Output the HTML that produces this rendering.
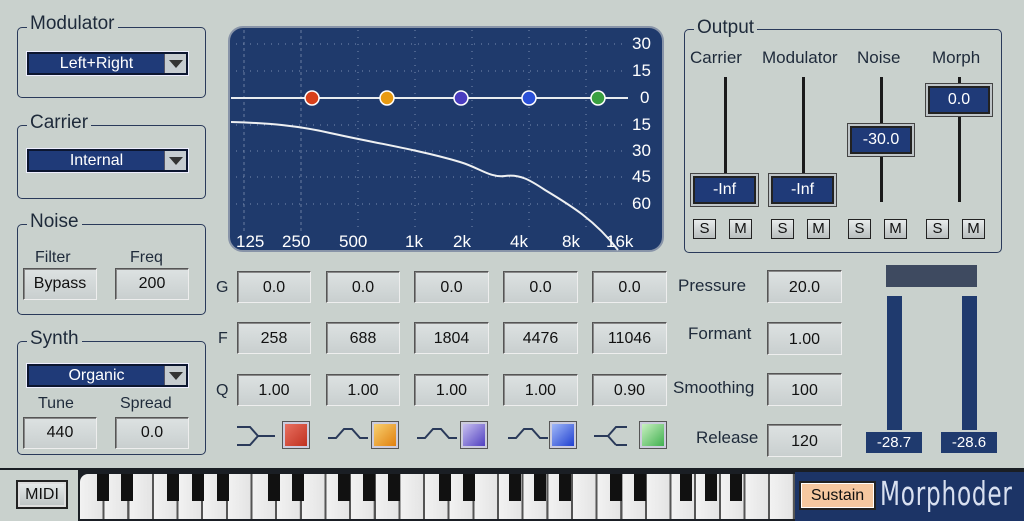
<!DOCTYPE html>
<html><head><meta charset="utf-8"><style>
*{box-sizing:border-box;margin:0;padding:0}
body{width:1024px;height:521px;overflow:hidden;background:#c9d1cd;font-family:"Liberation Sans",sans-serif;position:relative;color:#1e2a3a}
.a{position:absolute}
.box{position:absolute;border:1.5px solid #2a3a5a;border-radius:5px}
.ttl{position:absolute;background:#c9d1cd;font-size:19px;padding:0 3px;color:#1e2a3a;line-height:20px}
.dd{position:absolute;background:#1f3a78;border:2px solid #0c1630;box-shadow:0 0 0 1px #eef;color:#fff;font-size:16px;text-align:center;line-height:19px;padding-right:22px}
.dd i{position:absolute;right:0;top:0;width:22px;height:19px;background:#c6ccd0;border-left:1px solid #556}
.dd i:after{content:"";position:absolute;left:4px;top:6px;border-left:7px solid transparent;border-right:7px solid transparent;border-top:8px solid #333}
.fld{position:absolute;background:linear-gradient(#dde2e2,#c9cfcf);border:1px solid #555;border-right-color:#eee;border-bottom-color:#eee;box-shadow:inset 1px 1px 0 #888;font-size:16px;text-align:center;color:#111}
.lbl{position:absolute;font-size:16px;color:#1e2a3a}
.gl{position:absolute;color:#fff;font-size:17px}
.hd{position:absolute;background:#1f3a78;border:2px solid #222;box-shadow:0 0 0 2px #bfc5c8,0 0 0 3px #444;color:#fff;font-size:16px;text-align:center;line-height:24px}
.tr{position:absolute;width:3px;background:#1a1a1a}
.sm{position:absolute;width:23px;height:20px;background:linear-gradient(#e8ecec,#b8bebe);border:1.5px solid #222;font-size:15px;text-align:center;line-height:17px;color:#111}
.sw{position:absolute;width:28px;height:28px;border:1px solid #555;padding:2px;background:#ccd}
.sw b{display:block;width:100%;height:100%}
.mv{position:absolute;background:#1f3a6e;color:#fff;font-size:15px;text-align:center;line-height:21px}
</style></head><body>

<div class="box" style="left:17px;top:27px;width:189px;height:71px"></div>
<div class="ttl" style="left:27px;top:14px">Modulator</div>
<div class="dd" style="left:27px;top:52px;width:161px;height:23px">Left+Right<i></i></div>

<div class="box" style="left:17px;top:125px;width:189px;height:74px"></div>
<div class="ttl" style="left:27px;top:113px">Carrier</div>
<div class="dd" style="left:27px;top:149px;width:161px;height:23px">Internal<i></i></div>

<div class="box" style="left:17px;top:224px;width:189px;height:91px"></div>
<div class="ttl" style="left:27px;top:212px">Noise</div>
<div class="lbl" style="left:35px;top:249px">Filter</div>
<div class="lbl" style="left:130px;top:249px">Freq</div>
<div class="fld" style="left:23px;top:268px;width:74px;height:32px;line-height:30px">Bypass</div>
<div class="fld" style="left:115px;top:268px;width:74px;height:32px;line-height:30px">200</div>

<div class="box" style="left:17px;top:341px;width:189px;height:114px"></div>
<div class="ttl" style="left:27px;top:329px">Synth</div>
<div class="dd" style="left:27px;top:364px;width:161px;height:23px">Organic<i></i></div>
<div class="lbl" style="left:38px;top:395px">Tune</div>
<div class="lbl" style="left:120px;top:395px">Spread</div>
<div class="fld" style="left:23px;top:417px;width:74px;height:32px;line-height:30px">440</div>
<div class="fld" style="left:115px;top:417px;width:74px;height:32px;line-height:30px">0.0</div>

<svg class="a" style="left:228px;top:26px" width="436" height="226" viewBox="228 26 436 226">
<rect x="229" y="27" width="434" height="224" rx="14" fill="#1f3a6c" stroke="#8894a8" stroke-width="2"/>
<g stroke="#7a8cb0" stroke-width="1" stroke-dasharray="1 6">
<line x1="236" y1="44" x2="625" y2="44"/><line x1="236" y1="71" x2="625" y2="71"/>
<line x1="236" y1="125" x2="625" y2="125"/><line x1="236" y1="151" x2="625" y2="151"/>
<line x1="236" y1="177" x2="625" y2="177"/><line x1="236" y1="204" x2="625" y2="204"/>
<line x1="358" y1="30" x2="358" y2="232"/><line x1="415" y1="30" x2="415" y2="232"/>
<line x1="472" y1="30" x2="472" y2="232"/><line x1="529" y1="30" x2="529" y2="232"/><line x1="586" y1="30" x2="586" y2="232"/>
</g>
<line x1="244" y1="30" x2="244" y2="232" stroke="#6a7ca0" stroke-dasharray="3 3"/>
<line x1="301" y1="30" x2="301" y2="232" stroke="#6a7ca0" stroke-dasharray="3 3"/>
<line x1="231" y1="98" x2="628" y2="98" stroke="#e8ecf0" stroke-width="2"/>
<path d="M231 122 C270 123 300 126 330 133 C370 142 420 150 460 162 C480 168 490 178 505 176 C520 174 530 180 545 190 C570 205 595 220 618 250" fill="none" stroke="#eef0f2" stroke-width="2"/>
<g stroke="#fff" stroke-width="1.5">
<circle cx="312" cy="98" r="7" fill="#d8401a"/><circle cx="387" cy="98" r="7" fill="#e89a10"/>
<circle cx="461" cy="98" r="7" fill="#4a3cc0"/><circle cx="529" cy="98" r="7" fill="#2a50d8"/>
<circle cx="598" cy="98" r="7" fill="#3aa040"/></g>
</svg>
<div class="gl" style="left:632px;top:34px">30</div>
<div class="gl" style="left:632px;top:61px">15</div>
<div class="gl" style="left:640px;top:88px">0</div>
<div class="gl" style="left:632px;top:115px">15</div>
<div class="gl" style="left:632px;top:141px">30</div>
<div class="gl" style="left:632px;top:167px">45</div>
<div class="gl" style="left:632px;top:194px">60</div>
<div class="gl" style="left:236px;top:232px">125</div>
<div class="gl" style="left:282px;top:232px">250</div>
<div class="gl" style="left:339px;top:232px">500</div>
<div class="gl" style="left:405px;top:232px">1k</div>
<div class="gl" style="left:453px;top:232px">2k</div>
<div class="gl" style="left:510px;top:232px">4k</div>
<div class="gl" style="left:562px;top:232px">8k</div>
<div class="gl" style="left:606px;top:232px">16k</div>

<div class="lbl" style="left:216px;top:279px">G</div>
<div class="lbl" style="left:218px;top:330px">F</div>
<div class="lbl" style="left:216px;top:382px">Q</div>
<div class="fld" style="left:237px;top:271px;width:74px;height:32px;line-height:32px">0.0</div>
<div class="fld" style="left:326px;top:271px;width:74px;height:32px;line-height:32px">0.0</div>
<div class="fld" style="left:414px;top:271px;width:75px;height:32px;line-height:32px">0.0</div>
<div class="fld" style="left:503px;top:271px;width:75px;height:32px;line-height:32px">0.0</div>
<div class="fld" style="left:592px;top:271px;width:75px;height:32px;line-height:32px">0.0</div>
<div class="fld" style="left:237px;top:322px;width:74px;height:32px;line-height:32px">258</div>
<div class="fld" style="left:326px;top:322px;width:74px;height:32px;line-height:32px">688</div>
<div class="fld" style="left:414px;top:322px;width:75px;height:32px;line-height:32px">1804</div>
<div class="fld" style="left:503px;top:322px;width:75px;height:32px;line-height:32px">4476</div>
<div class="fld" style="left:592px;top:322px;width:75px;height:32px;line-height:32px">11046</div>
<div class="fld" style="left:237px;top:374px;width:74px;height:32px;line-height:32px">1.00</div>
<div class="fld" style="left:326px;top:374px;width:74px;height:32px;line-height:32px">1.00</div>
<div class="fld" style="left:414px;top:374px;width:75px;height:32px;line-height:32px">1.00</div>
<div class="fld" style="left:503px;top:374px;width:75px;height:32px;line-height:32px">1.00</div>
<div class="fld" style="left:592px;top:374px;width:75px;height:32px;line-height:32px">0.90</div>

<svg class="a" style="left:230px;top:420px" width="440" height="32" viewBox="230 420 440 32" fill="none" stroke="#2a3a5a" stroke-width="2">
<path d="M237 427 H250 L258 436 H275 M237 445 H250 L258 436"/>
<path d="M328 438 H336 L344 429 H352 L360 438 H368"/>
<path d="M417 438 H425 L433 429 H441 L449 438 H457"/>
<path d="M508 438 H516 L524 429 H532 L540 438 H548"/>
<path d="M594 436 H608 L616 427 H627 M616 445 H627 M616 445 L608 436"/>
</svg>
<div class="sw" style="left:282px;top:421px"><b style="background:linear-gradient(135deg,#e87060,#c03020)"></b></div>
<div class="sw" style="left:371px;top:421px"><b style="background:linear-gradient(135deg,#f8d070,#e08010)"></b></div>
<div class="sw" style="left:460px;top:421px"><b style="background:linear-gradient(135deg,#c8c0f0,#5040c0)"></b></div>
<div class="sw" style="left:549px;top:421px"><b style="background:linear-gradient(135deg,#a0b8f8,#2040d0)"></b></div>
<div class="sw" style="left:639px;top:421px"><b style="background:linear-gradient(135deg,#c8f0c0,#40b050)"></b></div>

<div class="lbl" style="left:678px;top:276px;font-size:17px">Pressure</div>
<div class="lbl" style="left:688px;top:324px;font-size:17px">Formant</div>
<div class="lbl" style="left:673px;top:378px;font-size:17px">Smoothing</div>
<div class="lbl" style="left:696px;top:428px;font-size:17px">Release</div>
<div class="fld" style="left:767px;top:270px;width:75px;height:33px;line-height:33px">20.0</div>
<div class="fld" style="left:767px;top:322px;width:75px;height:33px;line-height:33px">1.00</div>
<div class="fld" style="left:767px;top:373px;width:75px;height:33px;line-height:33px">100</div>
<div class="fld" style="left:767px;top:424px;width:75px;height:33px;line-height:33px">120</div>

<div class="box" style="left:684px;top:29px;width:318px;height:224px"></div>
<div class="ttl" style="left:694px;top:18px">Output</div>
<div class="lbl" style="left:690px;top:48px;font-size:17px">Carrier</div>
<div class="lbl" style="left:762px;top:48px;font-size:17px">Modulator</div>
<div class="lbl" style="left:857px;top:48px;font-size:17px">Noise</div>
<div class="lbl" style="left:932px;top:48px;font-size:17px">Morph</div>
<div class="tr" style="left:724px;top:77px;height:100px"></div>
<div class="tr" style="left:802px;top:77px;height:100px"></div>
<div class="tr" style="left:880px;top:77px;height:125px"></div>
<div class="tr" style="left:958px;top:77px;height:125px"></div>
<div class="hd" style="left:693px;top:176px;width:63px;height:28px">-Inf</div>
<div class="hd" style="left:771px;top:176px;width:63px;height:28px">-Inf</div>
<div class="hd" style="left:850px;top:126px;width:62px;height:28px">-30.0</div>
<div class="hd" style="left:928px;top:86px;width:62px;height:28px">0.0</div>
<div class="sm" style="left:693px;top:219px">S</div><div class="sm" style="left:729px;top:219px">M</div>
<div class="sm" style="left:771px;top:219px">S</div><div class="sm" style="left:807px;top:219px">M</div>
<div class="sm" style="left:848px;top:219px">S</div><div class="sm" style="left:884px;top:219px">M</div>
<div class="sm" style="left:926px;top:219px">S</div><div class="sm" style="left:962px;top:219px">M</div>

<div class="a" style="left:886px;top:265px;width:91px;height:22px;background:#3e4a60"></div>
<div class="a" style="left:887px;top:296px;width:15px;height:134px;background:#1f3a6e"></div>
<div class="a" style="left:962px;top:296px;width:15px;height:134px;background:#1f3a6e"></div>
<div class="mv" style="left:866px;top:432px;width:56px;height:21px">-28.7</div>
<div class="mv" style="left:941px;top:432px;width:56px;height:21px">-28.6</div>

<div class="a" style="left:0;top:468px;width:1024px;height:53px;background:#1a1e24"></div>
<div class="a" style="left:0;top:470px;width:78px;height:51px;background:#c9d1cd"></div>
<div class="a" style="left:16px;top:480px;width:52px;height:29px;border:2px solid #222;background:linear-gradient(#e8ecec,#bcc2c2);box-shadow:inset 0 0 0 2px #ddd;font-size:16px;text-align:center;line-height:25px;color:#111">MIDI</div>
<div class="a" style="left:80px;top:474px;width:715px;height:45px;border-radius:8px 0 0 0;background:repeating-linear-gradient(90deg,#f2f2f2 0,#e4e4e4 22.5px,#555 22.65px,#555 24.65px)"></div>
<svg class="a" style="left:80px;top:474px" width="715" height="28" viewBox="80 474 715 28" fill="#111">
<rect x="97" y="474" width="12" height="27"/><rect x="121" y="474" width="12" height="27"/><rect x="167" y="474" width="12" height="27"/><rect x="192" y="474" width="12" height="27"/><rect x="217" y="474" width="12" height="27"/>
<rect x="268" y="474" width="12" height="27"/><rect x="292" y="474" width="12" height="27"/><rect x="338" y="474" width="12" height="27"/><rect x="363" y="474" width="12" height="27"/><rect x="388" y="474" width="12" height="27"/>
<rect x="439" y="474" width="12" height="27"/><rect x="463" y="474" width="12" height="27"/><rect x="509" y="474" width="12" height="27"/><rect x="534" y="474" width="12" height="27"/><rect x="559" y="474" width="12" height="27"/>
<rect x="610" y="474" width="12" height="27"/><rect x="634" y="474" width="12" height="27"/><rect x="680" y="474" width="12" height="27"/><rect x="705" y="474" width="12" height="27"/><rect x="730" y="474" width="12" height="27"/>
</svg>
<div class="a" style="left:795px;top:472px;width:229px;height:49px;background:#1c3466"></div>
<div class="a" style="left:799px;top:481px;width:77px;height:29px;background:#f6c8a0;border:2px solid #222;box-shadow:inset 0 0 0 1px #fff;font-size:16px;text-align:center;line-height:25px;color:#111">Sustain</div>
<div class="a" style="left:880px;top:474px;font-size:33px;color:#d8e0f0;font-family:'DejaVu Sans Condensed','Liberation Sans Narrow',sans-serif;transform:scaleX(0.78);transform-origin:left;letter-spacing:1px">Morphoder</div>
</body></html>
